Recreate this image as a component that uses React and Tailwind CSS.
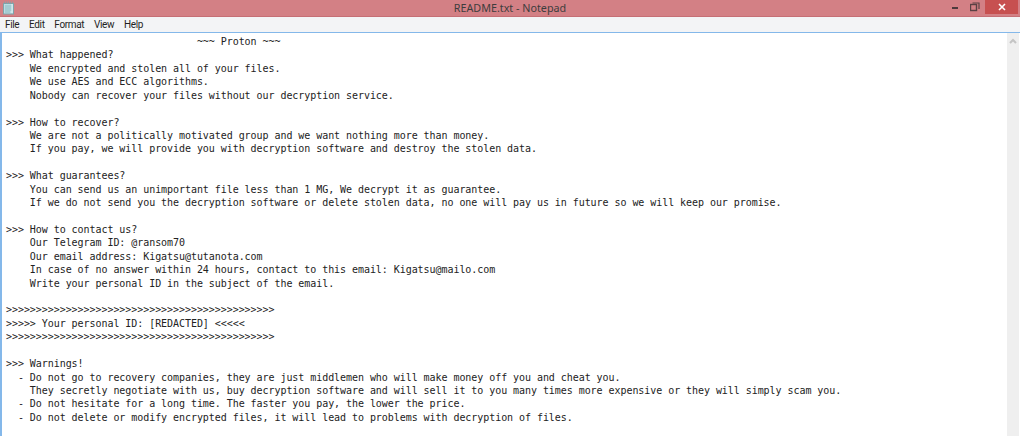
const lines = [
  '                                ~~~ Proton ~~~',
  '>>> What happened?',
  '    We encrypted and stolen all of your files.',
  '    We use AES and ECC algorithms.',
  '    Nobody can recover your files without our decryption service.',
  '',
  '>>> How to recover?',
  '    We are not a politically motivated group and we want nothing more than money.',
  '    If you pay, we will provide you with decryption software and destroy the stolen data.',
  '',
  '>>> What guarantees?',
  '    You can send us an unimportant file less than 1 MG, We decrypt it as guarantee.',
  '    If we do not send you the decryption software or delete stolen data, no one will pay us in future so we will keep our promise.',
  '',
  '>>> How to contact us?',
  '    Our Telegram ID: @ransom70',
  '    Our email address: Kigatsu@tutanota.com',
  '    In case of no answer within 24 hours, contact to this email: Kigatsu@mailo.com',
  '    Write your personal ID in the subject of the email.',
  '',
  '>>>>>>>>>>>>>>>>>>>>>>>>>>>>>>>>>>>>>>>>>>>>>',
  '>>>>> Your personal ID: [REDACTED] <<<<<',
  '>>>>>>>>>>>>>>>>>>>>>>>>>>>>>>>>>>>>>>>>>>>>>',
  '',
  '>>> Warnings!',
  '  - Do not go to recovery companies, they are just middlemen who will make money off you and cheat you.',
  '    They secretly negotiate with us, buy decryption software and will sell it to you many times more expensive or they will simply scam you.',
  '  - Do not hesitate for a long time. The faster you pay, the lower the price.',
  '  - Do not delete or modify encrypted files, it will lead to problems with decryption of files.',
];

const menus = ['File', 'Edit', 'Format', 'View', 'Help'];

function NotepadIcon() {
  return (
    <svg width="13" height="14" viewBox="0 0 13 14">
      <rect x="1.5" y="2.5" width="10" height="10.5" fill="#b9dde3" stroke="#7fa3aa" />
      <path d="M2 1.5h9" stroke="#8d9ea3" strokeWidth="2" strokeDasharray="1 1" />
      <path d="M3 5h7M3 7h7M3 9h7M3 11h5" stroke="#8fbac2" />
      <path d="M10 3v9" stroke="#e6f3f5" />
    </svg>
  );
}

export default function App() {
  return (
    <div className="w-[1020px] h-[436px] overflow-hidden flex flex-col bg-white font-['Liberation_Sans',sans-serif]">
      <div className="h-[17px] shrink-0 grid grid-cols-[90px_1fr_90px] bg-[#d38085] border-b border-[#c56f75]">
        <div className="pl-[2px] pt-[1px]">
          <NotepadIcon />
        </div>
        <div className="text-center text-[10.75px] leading-[16px] text-[#3d3d3d] font-['Noto_Sans',sans-serif]">
          README.txt - Notepad
        </div>
        <div className="flex items-start justify-end pr-[2px]">
          <div className="w-[20px] h-[14px] flex items-center justify-center">
            <div className="w-[6px] h-[2px] mt-[2px] bg-[#4d3a3c]" />
          </div>
          <div className="w-[20px] h-[14px] flex items-center justify-center">
            <svg width="10" height="10" viewBox="0 0 10 10" fill="none" stroke="#5a4144">
              <rect x="0.5" y="2.5" width="6" height="6" strokeWidth="1.4" />
              <path d="M2.5 1h6.5v6" strokeWidth="1.2" />
            </svg>
          </div>
          <div className="w-[33px] h-[14px] bg-[#c75050] flex items-center justify-center">
            <svg width="8" height="8" viewBox="0 0 8 8" stroke="#fff" strokeWidth="1.6">
              <path d="M1 1l6 6M7 1l-6 6" />
            </svg>
          </div>
        </div>
      </div>
      <div className="h-[15px] shrink-0 flex items-center bg-[#f3f4f6] pl-[5px] gap-[9.75px] text-[10px] tracking-[-0.35px] text-[#1f1f1f] font-['Roboto',sans-serif]">
        {menus.map((m) => (
          <span key={m}>{m}</span>
        ))}
      </div>
      <div className="flex-1 min-h-0 flex border-t border-l-2 border-[#84b8ea]">
        <div className="flex-1 pl-[4px] pt-[2px] overflow-hidden">
          {lines.map((l, i) => (
            <div key={i} className="h-[13.43px] leading-[13.43px] text-[10px] tracking-[-0.055px] whitespace-pre text-[#222] font-['DejaVu_Sans_Mono',monospace]">
              {l}
            </div>
          ))}
        </div>
        <div className="w-[12px] mr-[1px] bg-[#efefef] flex justify-center pt-[5px]">
          <svg width="8" height="6" viewBox="0 0 8 6" fill="none" stroke="#c4c4c4" strokeWidth="2">
            <path d="M1 5l3-3 3 3" />
          </svg>
        </div>
      </div>
    </div>
  );
}
